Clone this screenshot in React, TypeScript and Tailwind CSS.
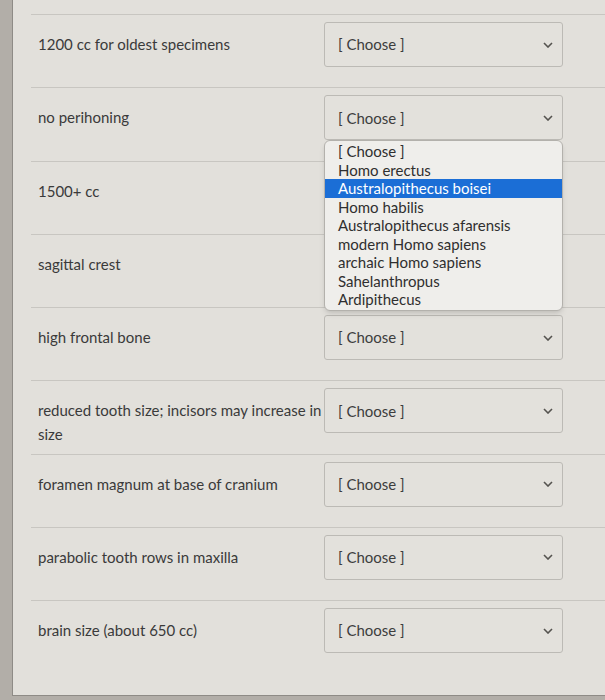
import React from 'react';

const rows: string[] = [
  '1200 cc for oldest specimens',
  'no perihoning',
  '1500+ cc',
  'sagittal crest',
  'high frontal bone',
  'reduced tooth size; incisors may increase in size',
  'foramen magnum at base of cranium',
  'parabolic tooth rows in maxilla',
  'brain size (about 650 cc)',
];

const options: string[] = [
  '[ Choose ]',
  'Homo erectus',
  'Australopithecus boisei',
  'Homo habilis',
  'Australopithecus afarensis',
  'modern Homo sapiens',
  'archaic Homo sapiens',
  'Sahelanthropus',
  'Ardipithecus',
];

const Chevron = () => (
  <svg width="10" height="6" viewBox="0 0 10 6" className="shrink-0">
    <polyline points="1,1 5,5 9,1" fill="none" stroke="#55534f" strokeWidth="1.6" />
  </svg>
);

// Dropdown list that is open under the second select
const OpenList = () => (
  <div className="absolute left-0 top-full z-10 w-full rounded-md border border-[#b3b1ac] bg-[#efeeeb] py-[1px] shadow-md">
    {options.map((opt, i) => (
      <div
        key={opt}
        className={`pl-[13px] text-[15px] leading-[18.5px] ${
          i === 2 ? 'bg-[#1b6ed6] text-white' : 'text-[#2f2f2f]'
        }`}
      >
        {opt}
      </div>
    ))}
  </div>
);

const Select = ({ open, hidden }: { open?: boolean; hidden?: boolean }) => (
  <div className={`relative mt-[7px] w-[239px] shrink-0 self-start ${hidden ? 'invisible' : ''}`}>
    <div className="flex h-[45px] items-center justify-between rounded-[3px] border border-[#bcbab5] bg-[#e3e1dc] pl-[13px] pr-[9px]">
      <span className="text-[15px] text-[#3d3d3d]">[ Choose ]</span>
      <Chevron />
    </div>
    {open && <OpenList />}
  </div>
);

export default function App() {
  return (
    <div
      className="h-[700px] overflow-hidden bg-[#b2aea8] pl-[12px]"
      style={{ fontFamily: 'Lato, "Open Sans", sans-serif' }}
    >
      <div className="h-[696px] border-b border-l border-[#8e8b86] bg-[#e2e0db] pl-[18px] pt-[14px]">
        {rows.map((label, i) => (
          <div key={label} className="flex h-[73.25px] border-t border-[#c8c6c1]">
            <div className="w-[293px] shrink-0 pl-[7px] pt-[17px] text-[15px] leading-6 text-[#3a3a3a]">
              {label}
            </div>
            <Select open={i === 1} hidden={i === 2 || i === 3} />
          </div>
        ))}
      </div>
    </div>
  );
}
